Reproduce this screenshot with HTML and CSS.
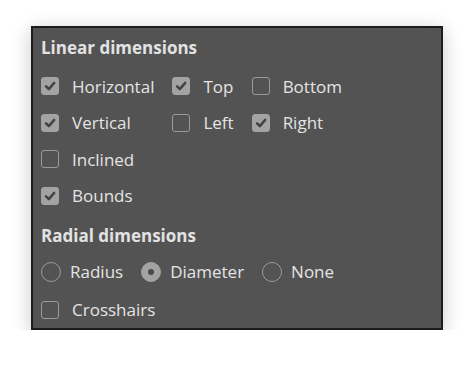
FILE: index.html
```html
<!DOCTYPE html>
<html>

<head>
    <title>Dimension Options</title>
    <link rel="stylesheet" href="styles.css">
</head>

<body>
    <div class="panel">
        <h2 class="heading">Linear dimensions</h2>
        <div class="grid">
            <label class="opt"><span class="box on"><svg viewBox="0 0 12 12"><path d="M2.6 6.3 L5 8.6 L9.6 3.4" /></svg></span>Horizontal</label>
            <label class="opt"><span class="box on"><svg viewBox="0 0 12 12"><path d="M2.6 6.3 L5 8.6 L9.6 3.4" /></svg></span>Top</label>
            <label class="opt"><span class="box"></span>Bottom</label>
            <label class="opt"><span class="box on"><svg viewBox="0 0 12 12"><path d="M2.6 6.3 L5 8.6 L9.6 3.4" /></svg></span>Vertical</label>
            <label class="opt"><span class="box"></span>Left</label>
            <label class="opt"><span class="box on"><svg viewBox="0 0 12 12"><path d="M2.6 6.3 L5 8.6 L9.6 3.4" /></svg></span>Right</label>
            <label class="opt"><span class="box"></span>Inclined</label>
            <span></span>
            <span></span>
            <label class="opt"><span class="box on"><svg viewBox="0 0 12 12"><path d="M2.6 6.3 L5 8.6 L9.6 3.4" /></svg></span>Bounds</label>
        </div>

        <h2 class="heading radial">Radial dimensions</h2>
        <div class="radios">
            <label class="opt"><span class="radio"></span>Radius</label>
            <label class="opt"><span class="radio on"></span>Diameter</label>
            <label class="opt"><span class="radio"></span>None</label>
        </div>
        <div class="last">
            <label class="opt"><span class="box"></span>Crosshairs</label>
        </div>
    </div>
</body>

</html>
```

FILE: styles.css
```css
body {
    margin: 0;
    background: #fff;
    font-family: "Open Sans", sans-serif;
}

.panel {
    box-sizing: border-box;
    width: 412px;
    height: 304px;
    margin: 26px 0 0 31px;
    padding: 10px 0 0 8px;
    background: #535353;
    border: 2px solid #1c1c1c;
    box-shadow: 0 4px 18px rgba(0, 0, 0, 0.22);
    color: #e4e4e4;
}

.heading {
    margin: 0;
    font-size: 17px;
    line-height: 20px;
    font-weight: bold;
    color: #e2e2e2;
}

.radial {
    margin-top: 20px;
}

.grid {
    display: grid;
    grid-template-columns: auto auto auto;
    justify-content: start;
    column-gap: 18px;
    row-gap: 16.5px;
    margin-top: 18px;
}

.radios {
    display: flex;
    gap: 18px;
    margin-top: 16px;
}

.last {
    margin-top: 18px;
}

.opt {
    display: flex;
    align-items: center;
    height: 20px;
    font-size: 17px;
}

.box {
    box-sizing: border-box;
    width: 18px;
    height: 18px;
    margin-right: 13px;
    border: 1.5px solid #9a9a9a;
    border-radius: 3px;
    flex: none;
    display: flex;
    align-items: center;
    justify-content: center;
}

.box.on {
    background: #a3a3a3;
    border-color: #a3a3a3;
}

.box svg {
    width: 14px;
    height: 14px;
}

.box path {
    fill: none;
    stroke: #444;
    stroke-width: 2.2;
    stroke-linecap: round;
    stroke-linejoin: round;
}

.radio {
    box-sizing: border-box;
    width: 20px;
    height: 20px;
    margin-right: 9px;
    border: 1.5px solid #9a9a9a;
    border-radius: 50%;
    flex: none;
    display: flex;
    align-items: center;
    justify-content: center;
}

.radio.on {
    background: #a3a3a3;
    border-color: #a3a3a3;
}

.radio.on::after {
    content: "";
    width: 6px;
    height: 6px;
    border-radius: 50%;
    background: #4a4a4a;
}
```
